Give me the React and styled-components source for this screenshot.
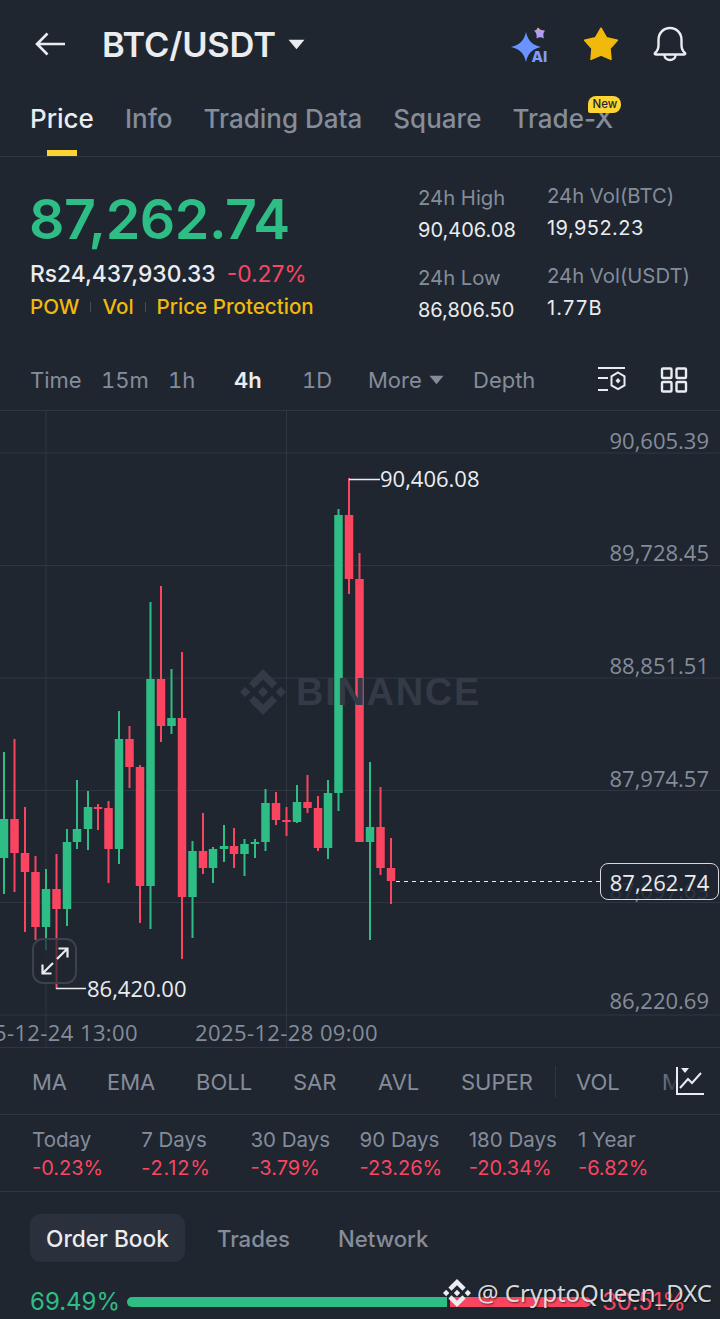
import React from 'react';
import styled, { createGlobalStyle } from 'styled-components';

const GREEN = '#2ebd85';
const RED = '#fb4560';
const YELLOW = '#f0b90b';
const GRAY = '#858c9a';
const LINE = '#2f3641';
const BG = '#1f2630';

const GlobalStyle = createGlobalStyle`
  html, body {
    margin: 0;
    background: ${BG};
    height: 1319px;
    overflow: hidden;
  }
  * {
    box-sizing: border-box;
  }
`;

// x, wick top, wick bottom, body top, body bottom, up
const candles = [
  [4, 752, 894, 819, 858, 1],
  [14.5, 739, 892, 819, 853, 0],
  [25, 807, 932, 853, 872, 0],
  [35.5, 856, 940, 872, 927, 0],
  [46, 869, 950, 889, 927, 1],
  [56.5, 854, 989, 889, 909, 0],
  [67, 829, 926, 842, 909, 1],
  [77, 780, 849, 829, 842, 1],
  [88, 791, 850, 807, 829, 1],
  [98, 804, 830, 807, 809, 0],
  [108.5, 801, 883, 808, 849, 0],
  [119, 711, 864, 739, 849, 1],
  [129.5, 726, 788, 739, 767, 0],
  [140, 765, 923, 767, 886, 0],
  [150.5, 602, 929, 679, 886, 1],
  [161, 586, 742, 679, 726, 0],
  [171.5, 669, 734, 718, 726, 1],
  [182, 652, 959, 718, 897, 0],
  [192.5, 841, 938, 851, 897, 1],
  [203, 813, 874, 851, 868, 0],
  [213, 847, 883, 849, 868, 1],
  [224, 825, 862, 846, 849, 1],
  [234, 828, 868, 846, 854, 0],
  [244.5, 839, 876, 844, 854, 1],
  [255, 839, 858, 842, 844, 1],
  [265.5, 789, 851, 803, 842, 1],
  [276, 792, 825, 803, 820, 0],
  [286.5, 807, 836, 820, 822, 0],
  [297, 785, 823, 802, 822, 1],
  [307.5, 775, 813, 802, 808, 0],
  [318, 796, 851, 808, 848, 0],
  [328, 780, 859, 793, 848, 1],
  [338.5, 509, 811, 515, 793, 1],
  [349, 478, 594, 515, 579, 0],
  [359.5, 553, 842, 579, 842, 0],
  [370, 762, 940, 827, 842, 1],
  [380.5, 787, 875, 827, 868, 0],
  [391, 838, 904, 868, 881, 0],
];

const gridY = [453, 565.5, 678, 790.5, 902.5, 1015];
const axis = [
  ['90,605.39', 449],
  ['89,728.45', 561],
  ['88,851.51', 674],
  ['87,974.57', 787],
  ['87,097.63', 899],
  ['86,220.69', 1009],
];

const tabs = ['Price', 'Info', 'Trading Data', 'Square', 'Trade-X'];
const intervals = [
  ['Time', 71],
  ['15m', 67],
  ['1h', 66],
  ['4h', 68],
  ['1D', 66],
];
const indicators = [
  ['MA', 75],
  ['EMA', 89],
  ['BOLL', 97],
  ['SAR', 85],
  ['AVL', 83],
  ['SUPER', 94],
];
// label, value, extra tracking for values with a narrow "1"
const periods = [
  ['Today', '-0.23%', 0],
  ['7 Days', '-2.12%', 0.8],
  ['30 Days', '-3.79%', 0],
  ['90 Days', '-23.26%', 0],
  ['180 Days', '-20.34%', 0],
  ['1 Year', '-6.82%', 0],
];

const BinanceLogo = ({ size, color }) => (
  <svg width={size} height={size} viewBox="0 0 126.61 126.61" fill={color}>
    <path d="m38.73 53.2 24.59-24.58 24.6 24.6 14.3-14.31L63.32 0 24.43 38.9z" />
    <path d="m0 63.31 14.3-14.31 14.31 14.31-14.31 14.3z" />
    <path d="m38.73 73.41 24.59 24.59 24.6-24.6 14.31 14.29-38.9 38.91-38.91-38.88z" />
    <path d="m98 63.31 14.3-14.31 14.31 14.3-14.31 14.32z" />
    <path d="m77.83 63.3-14.51-14.52-10.73 10.73-1.24 1.23-2.54 2.54 14.51 14.5 14.51-14.52z" />
  </svg>
);

const Caret = ({ color, w, h }) => (
  <svg width={w} height={h} viewBox="0 0 16 10" fill={color}>
    <path d="M0.5 0.5h15L8 9.5z" />
  </svg>
);

const BackIcon = () => (
  <svg width="32" height="24" viewBox="0 0 32 24" fill="none" stroke="#eaecef" strokeWidth="2.6">
    <path d="M31 12H3M13.5 1.5 3 12l10.5 10.5" />
  </svg>
);

const AiIcon = () => (
  <svg width="40" height="40" viewBox="0 -1 40 40">
    <path d="M17 7c1.800 8 5 12.500 15 15-10 2.500-13.200 7-15 15-1.800-8-5-12.500-15-15 10-2.500 13.200-7 15-15z" fill="#6b93ff" />
    <path d="M29 2.500c1.500 2.200 3.500 2.800 7 3-1.800 2.200-2.200 4.500-1 8-2.600-1.700-5-1.700-7.500 0 .5-3.500 0-5.800-2.500-8 2.500-.2 3-1 4-3z" fill="#b49cf5" />
    <path d="M29 2.500l2 3-3.500-.5z" fill="#f0b90b" />
    <text x="22.500" y="37" fontFamily="Inter, sans-serif" fontWeight="800" fontSize="15" fill="#7f9bff">AI</text>
  </svg>
);

const StarIcon = () => (
  <svg width="38" height="34" viewBox="-1 0 38 34" fill={YELLOW} stroke={YELLOW} strokeWidth="1.500" strokeLinejoin="round">
    <path d="M18 1.200l5.600 9.600 10.800 2.400-7.400 8.200 1 11-10-4.400-10 4.400 1-11-7.400-8.200 10.800-2.400z" />
  </svg>
);

const BellIcon = () => (
  <svg width="34" height="36" viewBox="0 0 34 36" fill="none" stroke="#eaecef" strokeWidth="2.400">
    <path d="M2 27c2.500-2 3.500-4 3.500-8v-5C5.500 7 10.500 2 17 2s11.500 5 11.500 12v5c0 4 1 6 3.500 8 .6.800.2 1.500-.8 1.500H2.800c-1 0-1.400-.7-.8-1.500z" />
    <path d="M11.500 29c0 3 2.500 5 5.500 5s5.500-2 5.500-5" />
  </svg>
);

const SettingsIcon = () => (
  <svg width="30" height="28" viewBox="0 0 30 28" fill="none" stroke="#eaecef" strokeWidth="2">
    <path d="M1 2h27M1 12h10M1 24h10" />
    <path d="M21 6.500l6.500 3.800v9L21 23l-6.500-3.700v-9z" />
    <path d="M21 12l2.500 2.800L21 17.600l-2.500-2.800z" fill="#eaecef" stroke="none" />
  </svg>
);

const GridIcon = () => (
  <svg width="28" height="26" viewBox="0 0 28 26" fill="none" stroke="#eaecef" strokeWidth="2.400">
    <rect x="2" y="1.500" width="9.500" height="9.500" rx="1" />
    <rect x="16.500" y="1.500" width="9.500" height="9.500" rx="1" />
    <rect x="2" y="15" width="9.500" height="9.500" rx="1" />
    <rect x="16.500" y="15" width="9.500" height="9.500" rx="1" />
  </svg>
);

const IndicatorIcon = () => (
  <svg width="30" height="30" viewBox="0 0 30 30" fill="none" stroke="#eaecef" strokeWidth="2">
    <path d="M2 1v27h27" />
    <path d="M5 22l8-9 4 4 9-10" />
    <path d="M6 2h8l-4 5z" fill="#eaecef" stroke="none" />
  </svg>
);

const PriceChart = () => (
  <svg width="720" height="636" viewBox="0 411 720 636">
    {gridY.map((y) => (
      <line key={y} x1="0" x2="720" y1={y} y2={y} stroke={LINE} />
    ))}
    <line x1="46" x2="46" y1="411" y2="1047" stroke={LINE} />
    <line x1="286.500" x2="286.500" y1="411" y2="1047" stroke={LINE} />
    {candles.map(([x, wt, wb, bt, bb, up]) => {
      const color = up ? GREEN : RED;
      return (
        <g key={x} fill={color}>
          <rect x={x - 1} y={wt} width="2" height={wb - wt} />
          <rect x={x - 4.25} y={bt} width="8.500" height={bb - bt} />
        </g>
      );
    })}
    <g fontFamily="'Open Sans', sans-serif" fontSize="22" fill={GRAY}>
      {axis.map(([label, y]) => (
        <text key={label} x="709" y={y} textAnchor="end">{label}</text>
      ))}
      <text x="46.500" y="1041" textAnchor="middle" letterSpacing="0.4">2025-12-24 13:00</text>
      <text x="286.500" y="1041" textAnchor="middle" letterSpacing="0.4">2025-12-28 09:00</text>
    </g>
    <g fontFamily="'Open Sans', sans-serif" fontSize="22" fill="#eaecef">
      <path d="M349 479.500h31M56 988.500h30" stroke="#eaecef" strokeWidth="1.500" />
      <text x="380" y="487">90,406.08</text>
      <text x="87" y="997">86,420.00</text>
    </g>
    <line x1="396" x2="600" y1="881.500" y2="881.500" stroke="#eaecef" strokeDasharray="4 4" />
  </svg>
);

const Page = styled.div`
  width: 720px;
  height: 1319px;
  overflow: hidden;
  position: relative;
  background: ${BG};
  color: #eaecef;
  font-family: Inter, 'Noto Sans', sans-serif;
`;

const Header = styled.header`
  height: 88px;
  display: flex;
  align-items: center;
  padding: 0 33px 0 34px;
`;

const Title = styled.h1`
  margin: 0 12px 0 36px;
  font-size: 34.5px;
  font-weight: 600;
  letter-spacing: -0.2px;
`;

const HeaderIcons = styled.div`
  margin-left: auto;
  display: flex;
  align-items: center;
  gap: 33px;
`;

const TabBar = styled.nav`
  height: 69px;
  display: flex;
  gap: 31px;
  padding: 0 0 0 30px;
  border-bottom: 1px solid ${LINE};
`;

const Tab = styled.div`
  position: relative;
  padding-top: 15px;
  font-size: 26px;
  font-weight: 500;
  color: ${({ $active }) => ($active ? '#eaecef' : GRAY)};
  &::after {
    content: '';
    display: ${({ $active }) => ($active ? 'block' : 'none')};
    position: absolute;
    left: 17px;
    bottom: 0;
    width: 30px;
    height: 6px;
    background: #fcd535;
  }
`;

const NewBadge = styled.span`
  position: absolute;
  top: 8px;
  right: -8px;
  padding: 0 4px;
  height: 17px;
  border-radius: 8px 8px 8px 2px;
  background: #fcd535;
  color: #1f2630;
  font-size: 11.5px;
  line-height: 17px;
  font-weight: 500;
`;

const Summary = styled.section`
  height: 194px;
  display: flex;
  padding: 30px 0 0 30px;
`;

const PriceBlock = styled.div`
  width: 388px;
`;

const LastPrice = styled.div`
  margin-left: -1px;
  font-size: 55.5px;
  line-height: 64px;
  font-weight: 600;
  color: ${GREEN};
  letter-spacing: -0.5px;
`;

const FiatRow = styled.div`
  display: flex;
  gap: 11px;
  margin-top: 8px;
  font-size: 22.8px;
  line-height: 30px;
  font-weight: 500;
`;

const Change = styled.span`
  color: ${RED};
  font-weight: 400;
`;

const TagRow = styled.div`
  display: flex;
  align-items: center;
  margin-top: 3px;
  font-size: 20.6px;
  line-height: 30px;
  color: ${YELLOW};
  font-weight: 500;
`;

const TagDivider = styled.i`
  width: 1px;
  height: 10px;
  margin: 0 11px;
  background: #474d57;
`;

const StatColumn = styled.div`
  width: ${({ $w }) => $w}px;
  margin-top: ${({ $top }) => $top}px;
`;

const Stat = styled.div`
  height: 80px;
`;

const StatLabel = styled.div`
  font-size: 20.3px;
  line-height: 30px;
  color: ${GRAY};
`;

const StatValue = styled.div`
  margin-top: 1px;
  font-size: 20px;
  line-height: 32px;
  letter-spacing: ${({ $track }) => $track || 0}px;
  color: #eaecef;
`;

const IntervalBar = styled.div`
  height: 60px;
  display: flex;
  align-items: center;
  padding: 0 32px 2px 30px;
  border-bottom: 1px solid ${LINE};
  font-size: 22px;
  color: ${GRAY};
`;

const Interval = styled.span`
  width: ${({ $w }) => $w}px;
  font-variant-numeric: tabular-nums;
  color: ${({ $active }) => ($active ? '#eaecef' : GRAY)};
  font-weight: ${({ $active }) => ($active ? 600 : 400)};
`;

const MoreButton = styled.span`
  display: flex;
  align-items: center;
  gap: 7px;
  width: 105px;
`;

const IntervalIcons = styled.div`
  margin-left: auto;
  display: flex;
  align-items: center;
  gap: 33px;
`;

const ChartArea = styled.div`
  position: relative;
  height: 637px;
  border-bottom: 1px solid ${LINE};
  overflow: hidden;
  svg {
    display: block;
  }
`;

const Watermark = styled.div`
  position: absolute;
  left: 240px;
  top: 258px;
  display: flex;
  align-items: center;
  gap: 10px;
  font-family: 'Liberation Sans', sans-serif;
  font-size: 38px;
  font-weight: 700;
  letter-spacing: 1.7px;
  color: #343a46;
`;

const PriceTag = styled.div`
  position: absolute;
  right: 1px;
  top: 452px;
  width: 119px;
  height: 37px;
  display: flex;
  align-items: center;
  justify-content: center;
  border: 1px solid #d5d8dc;
  border-radius: 8px;
  background: rgba(31, 38, 48, 0.85);
  font-family: 'Open Sans', sans-serif;
  font-size: 22px;
  color: #eaecef;
`;

const ExpandButton = styled.button`
  position: absolute;
  left: 32px;
  top: 527px;
  width: 45px;
  height: 46px;
  padding: 0;
  display: flex;
  align-items: center;
  justify-content: center;
  border: 2px solid #3b424d;
  border-radius: 11px;
  background: rgba(31, 38, 48, 0.7);
`;

const IndicatorBar = styled.div`
  position: relative;
  height: 67px;
  display: flex;
  align-items: center;
  padding: 1px 0 0 32px;
  border-bottom: 1px solid ${LINE};
  font-size: 22px;
  color: ${GRAY};
`;

const Indicator = styled.span`
  width: ${({ $w }) => $w}px;
`;

const IndicatorDivider = styled.i`
  width: 1px;
  height: 32px;
  margin-right: 20px;
  background: ${LINE};
`;

const IndicatorFade = styled.div`
  position: absolute;
  right: 0;
  top: 0;
  bottom: 0;
  width: 60px;
  display: flex;
  align-items: center;
  justify-content: center;
  background: linear-gradient(to right, transparent, ${BG} 30%);
`;

const PeriodRow = styled.div`
  height: 77px;
  display: grid;
  grid-template-columns: repeat(6, 109.2px);
  align-content: center;
  padding: 1px 0 0 32px;
  border-bottom: 1px solid ${LINE};
`;

const PeriodLabel = styled.div`
  font-size: 20.5px;
  line-height: 28px;
  color: ${GRAY};
`;

const PeriodValue = styled.div`
  font-size: 20px;
  line-height: 28px;
  letter-spacing: ${({ $track }) => $track}px;
  color: ${RED};
`;

const BookTabs = styled.div`
  display: flex;
  align-items: center;
  gap: 16px;
  padding: 22px 0 0 30px;
  font-weight: 500;
`;

const BookTab = styled.div`
  height: 48px;
  padding: 0 16px;
  display: flex;
  align-items: center;
  border-radius: 10px;
  font-size: ${({ $active }) => ($active ? '22.7px' : '22.2px')};
  background: ${({ $active }) => ($active ? '#2a303c' : 'transparent')};
  color: ${({ $active }) => ($active ? '#eaecef' : GRAY)};
`;

const RatioRow = styled.div`
  display: flex;
  align-items: center;
  gap: 7px;
  padding: 25px 0 0 30px;
  font-size: 24px;
`;

const RatioBar = styled.div`
  width: 464px;
  height: 10px;
  margin-right: 4px;
  display: flex;
  gap: 3px;
`;

const RatioFill = styled.div`
  flex: ${({ $share }) => $share};
  background: ${({ $color }) => $color};
  border-radius: ${({ $side }) => ($side === 'left' ? '5px 0 0 5px' : '0 5px 5px 0')};
`;

const RatioText = styled.span`
  color: ${({ $color }) => $color};
`;

const Credit = styled.div`
  position: absolute;
  left: 443px;
  top: 1276px;
  display: flex;
  align-items: center;
  gap: 6px;
  font-family: 'Noto Sans', sans-serif;
  font-size: 24px;
  white-space: nowrap;
  color: rgba(234, 236, 239, 0.92);
  text-shadow: 1px 1px 2px rgba(0, 0, 0, 0.6);
  svg {
    flex: none;
  }
`;

const App = () => {
  return (
    <Page>
      <GlobalStyle />
      <Header>
        <BackIcon />
        <Title>BTC/USDT</Title>
        <Caret color="#eaecef" w={17} h={11} />
        <HeaderIcons>
          <AiIcon />
          <StarIcon />
          <BellIcon />
        </HeaderIcons>
      </Header>
      <TabBar>
        {tabs.map((tab, i) => (
          <Tab key={tab} $active={i === 0}>
            {tab}
            {tab === 'Trade-X' && <NewBadge>New</NewBadge>}
          </Tab>
        ))}
      </TabBar>
      <Summary>
        <PriceBlock>
          <LastPrice>87,262.74</LastPrice>
          <FiatRow>
            <span>Rs24,437,930.33</span>
            <Change>-0.27%</Change>
          </FiatRow>
          <TagRow>
            POW
            <TagDivider />
            Vol
            <TagDivider />
            Price Protection
          </TagRow>
        </PriceBlock>
        <StatColumn $w={129} $top={-4}>
          <Stat>
            <StatLabel>24h High</StatLabel>
            <StatValue>90,406.08</StatValue>
          </Stat>
          <Stat>
            <StatLabel>24h Low</StatLabel>
            <StatValue>86,806.50</StatValue>
          </Stat>
        </StatColumn>
        <StatColumn $w={170} $top={-6}>
          <Stat>
            <StatLabel>24h Vol(BTC)</StatLabel>
            <StatValue $track={0.45}>19,952.23</StatValue>
          </Stat>
          <Stat>
            <StatLabel>24h Vol(USDT)</StatLabel>
            <StatValue $track={1.2}>1.77B</StatValue>
          </Stat>
        </StatColumn>
      </Summary>
      <IntervalBar>
        {intervals.map(([label, w]) => (
          <Interval key={label} $w={w} $active={label === '4h'}>{label}</Interval>
        ))}
        <MoreButton>
          More
          <Caret color={GRAY} w={15} h={10} />
        </MoreButton>
        <span>Depth</span>
        <IntervalIcons>
          <SettingsIcon />
          <GridIcon />
        </IntervalIcons>
      </IntervalBar>
      <ChartArea>
        <Watermark>
          <BinanceLogo size={46} color="#343a46" />
          BINANCE
        </Watermark>
        <PriceChart />
        <PriceTag>87,262.74</PriceTag>
        <ExpandButton aria-label="Expand chart">
          <svg width="30" height="30" viewBox="0 0 30 30" fill="none" stroke="#eaecef" strokeWidth="2.200">
            <path d="M17 13L27 3M18.500 2.500H27.500V11.500" />
            <path d="M13 17L3 27M11.500 27.500H2.500V18.500" />
          </svg>
        </ExpandButton>
      </ChartArea>
      <IndicatorBar>
        {indicators.map(([label, w]) => (
          <Indicator key={label} $w={w}>{label}</Indicator>
        ))}
        <IndicatorDivider />
        <Indicator $w={86}>VOL</Indicator>
        <Indicator $w={40}>M</Indicator>
        <IndicatorFade>
          <IndicatorIcon />
        </IndicatorFade>
      </IndicatorBar>
      <PeriodRow>
        {periods.map(([label, value, track]) => (
          <div key={label}>
            <PeriodLabel>{label}</PeriodLabel>
            <PeriodValue $track={track}>{value}</PeriodValue>
          </div>
        ))}
      </PeriodRow>
      <BookTabs>
        <BookTab $active>Order Book</BookTab>
        <BookTab>Trades</BookTab>
        <BookTab>Network</BookTab>
      </BookTabs>
      <RatioRow>
        <RatioText $color={GREEN}>69.49%</RatioText>
        <RatioBar>
          <RatioFill $share={69.49} $color={GREEN} $side="left" />
          <RatioFill $share={30.51} $color={RED} $side="right" />
        </RatioBar>
        <RatioText $color={RED}>30.51%</RatioText>
      </RatioRow>
      <Credit>
        <BinanceLogo size={28} color="#eaecef" />
        @ CryptoQueen_DXC
      </Credit>
    </Page>
  );
};

export default App;
